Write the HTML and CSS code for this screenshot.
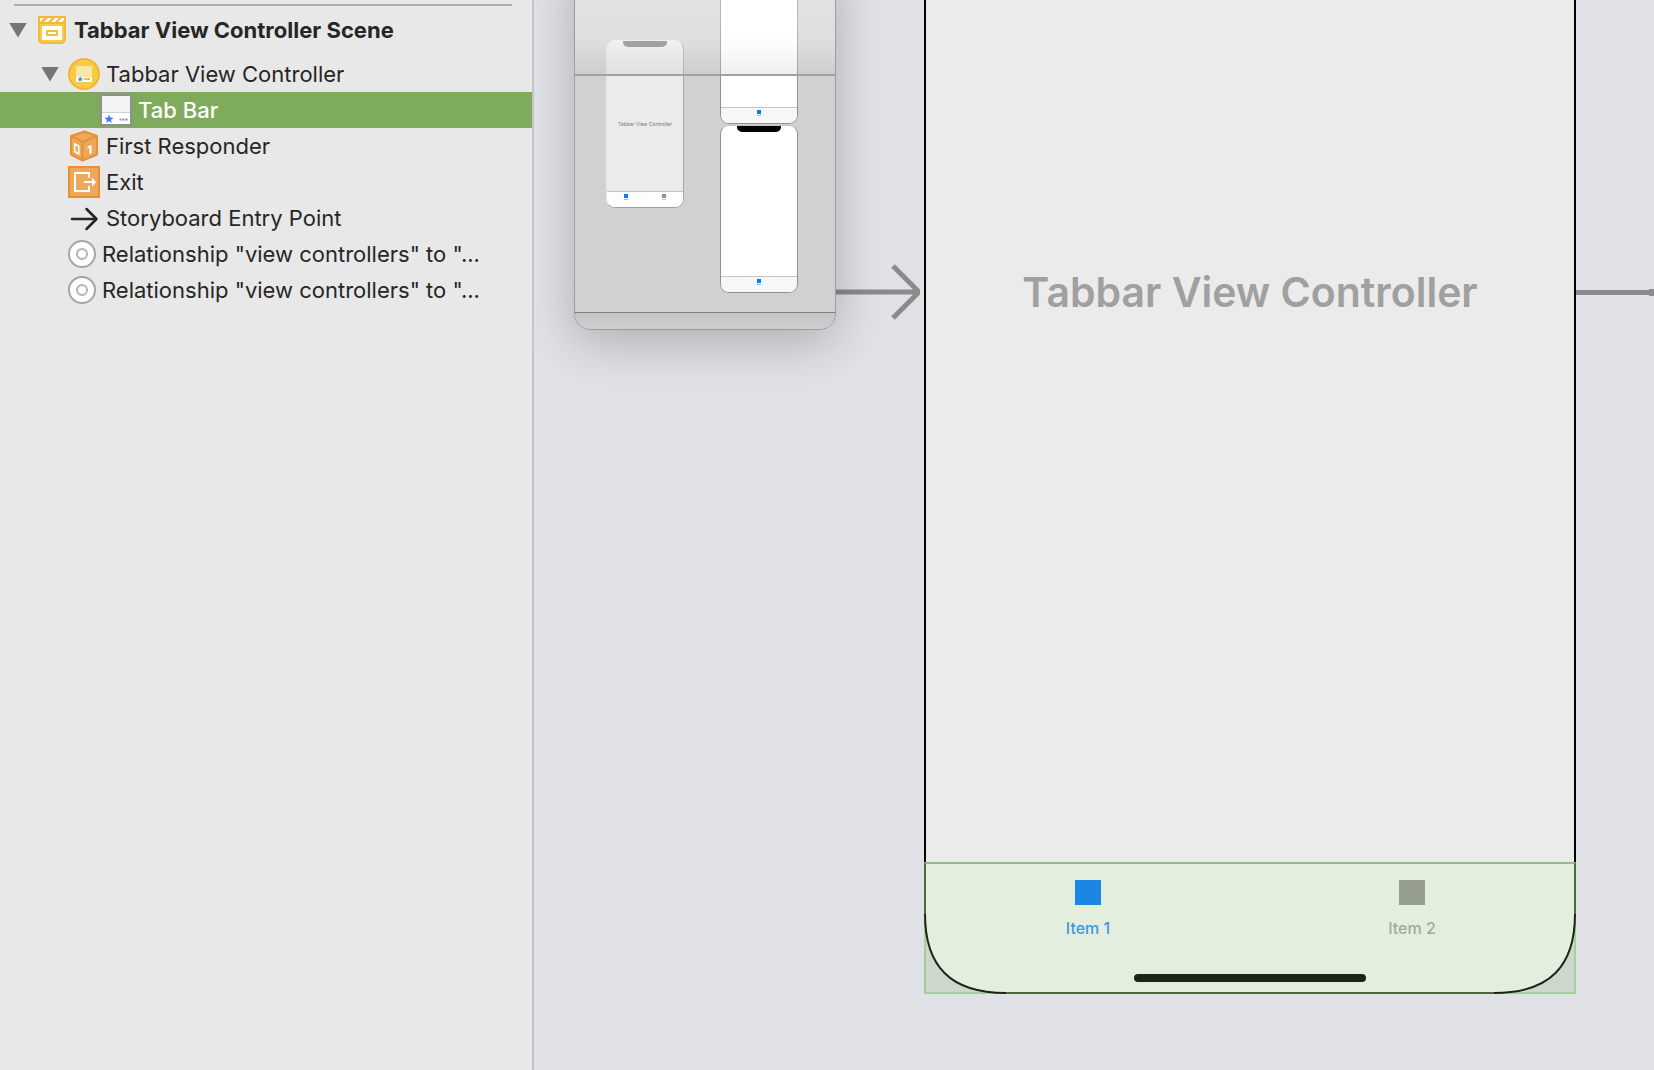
FILE: index.html
```html
<!DOCTYPE html>
<html lang="en">
<head>
  <meta charset="UTF-8" />
  <meta name="viewport" content="width=device-width, initial-scale=1.0"/>
  <title>Tabbar View Controller Scene</title>
  <link rel="stylesheet" href="styles.css">
</head>
<body>

  <!-- Document outline -->
  <aside class="outline">
    <hr>
    <ul class="tree">
      <li class="row scene">
        <button class="toggle" aria-label="Collapse scene"></button>
        <svg class="icon" viewBox="0 0 32 32">
          <path d="M2 2h28v23a5 5 0 0 1-5 5H7a5 5 0 0 1-5-5z" fill="#f5b83d"/>
          <path d="M4 8V4h4zM8 8l4-4h4l-4 4zM15 8l4-4h4l-4 4zM22 8l4-4h2v2l-2 2z" fill="#fff"/>
          <path d="M4 10h24v14a4 4 0 0 1-4 4H8a4 4 0 0 1-4-4z" fill="#f7cb45"/>
          <path d="M6 12h20v14H6z" fill="#fff"/>
          <path d="M11 17h10v4H11z" fill="#fff" stroke="#f5bd3f" stroke-width="2"/>
        </svg>
        <span>Tabbar View Controller Scene</span>
      </li>
      <li class="row nested">
        <button class="toggle" aria-label="Collapse controller"></button>
        <svg class="icon" viewBox="0 0 32 32">
          <circle cx="16" cy="16" r="15" fill="#f7cb45" stroke="#f4b43b" stroke-width="2"/>
          <path d="M8 8h16v11H8z" fill="#fbe6a8"/>
          <path d="M8 19h16v5H8z" fill="#fff"/>
          <path d="M12.300 18.500l.8 1.700 1.900.2-1.400 1.300.4 1.900-1.700-1-1.700 1 .4-1.900-1.400-1.300 1.900-.2z" fill="#3d86f6"/>
          <path d="M16 20h6v2h-6z" fill="#f3b65c"/>
        </svg>
        <span>Tabbar View Controller</span>
      </li>
      <li class="row leaf selected">
        <svg class="icon" viewBox="0 0 32 32">
          <path d="M1 1h30v30H1z" fill="#f3f3f3" stroke="#8e8e93" stroke-width="2"/>
          <path d="M2 19h28v11H2z" fill="#fff"/>
          <path d="M2 18h28v1H2z" fill="#cfcfcf"/>
          <path d="M9 20.500l1.200 3.100 3.300.2-2.500 2.100.8 3.200L9 27.300l-2.800 1.800.8-3.200-2.500-2.100 3.300-.2z" fill="#3f7df6"/>
          <path d="M19.500 24.500h2v2h-2zM22.500 24.500h2v2h-2zM25.500 24.500h2v2h-2z" fill="#8e8e93"/>
        </svg>
        <span>Tab Bar</span>
      </li>
      <li class="row">
        <svg class="icon" viewBox="0 0 32 32">
          <path d="M16.500 1.500L29 6v18.500L14.500 30.500 3 24.500V6z" fill="#eda85a" stroke="#e79136" stroke-width="2" stroke-linejoin="round"/>
          <path d="M3 6l11.500 6L29 6M14.500 12v18" fill="none" stroke="#e79136" stroke-width="2"/>
          <path d="M6.700 14l4 2v8l-4-2.500z" fill="none" stroke="#fff" stroke-width="1.500"/>
          <path d="M19.500 17l3-2h1v8.500l-2 .6V17.800l-2 .9z" fill="#fff"/>
        </svg>
        <span>First Responder</span>
      </li>
      <li class="row">
        <svg class="icon" viewBox="0 0 32 32">
          <path d="M1 1h30v30H1z" fill="#eda85a" stroke="#e79136" stroke-width="2"/>
          <path d="M21 12V7H7v18h14v-5" fill="none" stroke="#fff" stroke-width="2"/>
          <path d="M16 15h8v-3.500l4 4.500-4 4.500V17h-8z" fill="#fff"/>
        </svg>
        <span>Exit</span>
      </li>
      <li class="row">
        <svg class="icon" viewBox="0 0 32 32">
          <path d="M4 17h24M18.500 7L28.500 17l-10 10" fill="none" stroke="#262626" stroke-width="2.500" stroke-linecap="round" stroke-linejoin="round"/>
        </svg>
        <span>Storyboard Entry Point</span>
      </li>
      <li class="row">
        <svg class="icon small" viewBox="0 0 28 28">
          <circle cx="14" cy="14" r="13" fill="#fff" stroke="#a6a6a6" stroke-width="2"/>
          <circle cx="14" cy="14" r="5" fill="none" stroke="#b3b3b3" stroke-width="2"/>
        </svg>
        <span>Relationship "view controllers" to "...</span>
      </li>
      <li class="row">
        <svg class="icon small" viewBox="0 0 28 28">
          <circle cx="14" cy="14" r="13" fill="#fff" stroke="#a6a6a6" stroke-width="2"/>
          <circle cx="14" cy="14" r="5" fill="none" stroke="#b3b3b3" stroke-width="2"/>
        </svg>
        <span>Relationship "view controllers" to "...</span>
      </li>
    </ul>
  </aside>

  <!-- Storyboard canvas -->
  <main class="canvas">

    <svg class="entry-arrow" viewBox="0 0 84 56">
      <path d="M0 28h80M57 2l26 26-26 26" fill="none" stroke="#8b8b8b" stroke-width="5"/>
    </svg>

    <div class="minimap">
      <div class="mini mini-tabbar">
        <i class="notch"></i>
        <p>Tabbar View Controller</p>
        <div class="mini-tabs"><i></i><i class="off"></i></div>
      </div>
      <div class="mini mini-first">
        <div class="mini-tabs"><i></i></div>
      </div>
      <div class="mini mini-second">
        <i class="notch"></i>
        <div class="mini-tabs"><i></i></div>
      </div>
      <div class="minimap-top"></div>
      <div class="minimap-bottom"></div>
    </div>

    <section class="phone">
      <h1>Tabbar View Controller</h1>
      <nav class="tab-bar">
        <button class="tab active"><i></i>Item 1</button>
        <button class="tab"><i></i>Item 2</button>
        <div class="home-indicator"></div>
        <svg class="corner" viewBox="0 0 90 90">
          <path d="M0 10C1 62 26 89 82 90H0z" fill="#cdd8cd"/>
          <path d="M1 10v79h81" fill="none" stroke="#a5cf94" stroke-width="2"/>
          <path d="M1 10C1 62 26 89 82 89" fill="none" stroke="#1c2415" stroke-width="2"/>
        </svg>
        <svg class="corner right" viewBox="0 0 90 90">
          <path d="M0 10C1 62 26 89 82 90H0z" fill="#cdd8cd"/>
          <path d="M1 10v79h81" fill="none" stroke="#a5cf94" stroke-width="2"/>
          <path d="M1 10C1 62 26 89 82 89" fill="none" stroke="#1c2415" stroke-width="2"/>
        </svg>
      </nav>
    </section>

    <div class="segue"></div>
  </main>

</body>
</html>
```
FILE: styles.css
```css
body {
  font-family: Inter, "Liberation Sans", sans-serif;
  margin: 0;
  min-height: 100vh;
  display: flex;
  background-color: #e1e2e7;
  color: #262626;
}

button {
  font-family: inherit;
  border: none;
  background: none;
  padding: 0;
  cursor: pointer;
}

/* Outline */
.outline {
  width: 532px;
  flex-shrink: 0;
  background-color: #e8e8e8;
  border-right: 2px solid #c4c4c4;
}

.outline hr {
  height: 2px;
  margin: 4px 20px 6px 14px;
  border: none;
  background-color: #adadad;
}

.tree {
  list-style: none;
  margin: 0;
  padding: 0;
}

.row {
  display: flex;
  align-items: center;
  height: 36px;
  padding-left: 68px;
  font-size: 22px;
  white-space: nowrap;
}

.row.scene {
  padding-left: 9px;
  margin-bottom: 8px;
  font-weight: 700;
}

.row.nested {
  padding-left: 41px;
}

.row.leaf {
  padding-left: 100px;
}

.row.selected {
  background-color: #7fac5c;
  color: white;
  font-weight: 500;
}

.toggle {
  width: 18px;
  height: 15px;
  margin-right: 9px;
  background-color: #757575;
  clip-path: polygon(0 0, 100% 0, 50% 100%);
}

.icon {
  width: 32px;
  height: 32px;
  margin-right: 6px;
}

.icon.small {
  width: 28px;
  height: 28px;
}

/* Canvas */
.canvas {
  position: relative;
  flex: 1;
  overflow: hidden;
}

.minimap {
  position: absolute;
  left: 40px;
  top: -40px;
  width: 260px;
  height: 368px;
  border: 1px solid #9c9d9d;
  border-radius: 16px;
  background-color: #d0d1d3;
  box-shadow: 0 12px 50px rgba(0, 0, 0, 0.24);
  overflow: hidden;
}

.minimap-top {
  position: absolute;
  top: 0;
  left: 0;
  right: 0;
  height: 113px;
  border-bottom: 2px solid #a0a1a1;
  background: linear-gradient(rgba(255, 255, 253, 0.35) 50%, rgba(250, 250, 245, 0.3) 72%, rgba(200, 200, 198, 0.3));
}

.minimap-bottom {
  position: absolute;
  bottom: 0;
  left: 0;
  right: 0;
  height: 16px;
  border-top: 1px solid #808080;
  background: linear-gradient(#c5c6c5, #cdcecd);
}

.mini {
  position: absolute;
  box-sizing: border-box;
  width: 78px;
  height: 168px;
  border: 1px solid #909090;
  border-radius: 9px;
  background-color: white;
  display: flex;
  flex-direction: column;
  align-items: center;
  overflow: hidden;
}

.mini-tabbar {
  left: 31px;
  top: 79px;
  background-color: #ebebeb;
  border-color: #ebebeb #a8a8a8 #a0a0a0 #e4e4e4;
}

.mini-first {
  left: 145px;
  top: -5px;
}

.mini-second {
  left: 145px;
  top: 164px;
  border-top-color: #c0c0c0;
}

.notch {
  width: 44px;
  height: 6px;
  border-radius: 0 0 5px 5px;
  background-color: black;
}

.mini-tabbar .notch {
  background-color: #7c7c7c;
}

.mini p {
  margin: 73px 0 0;
  font-size: 5px;
  line-height: 8px;
  color: #777;
}

.mini-tabs {
  width: 100%;
  height: 15px;
  margin-top: auto;
  border-top: 1px solid #c4c4c4;
  background-color: #f7f7f7;
  display: flex;
  justify-content: space-around;
}

.mini-tabbar .mini-tabs {
  background-color: #fdfdfd;
}

.mini-tabs i {
  width: 4px;
  height: 4px;
  margin-top: 2px;
  background-color: #0a7aff;
}

.mini-tabs i::after {
  content: "";
  display: block;
  height: 1px;
  margin-top: 5px;
  background-color: #8dbdf8;
}

.mini-tabs .off {
  background-color: #929292;
}

.mini-tabs .off::after {
  background-color: #c0c0c0;
}

.entry-arrow {
  position: absolute;
  left: 302px;
  top: 264px;
  width: 84px;
  height: 56px;
}

.segue {
  position: absolute;
  left: 1042px;
  right: 0;
  top: 290px;
  height: 5px;
  background-color: #8b8b8b;
}

.segue::after {
  content: "";
  position: absolute;
  right: 0;
  top: -1px;
  width: 5px;
  height: 7px;
  background-color: #8b8b8b;
}

/* Device */
.phone {
  position: absolute;
  left: 390px;
  top: 0;
  width: 652px;
  height: 994px;
  display: flex;
  flex-direction: column;
  justify-content: space-between;
  background-color: #ebebeb;
}

.phone h1 {
  flex: 1;
  margin: 0;
  padding-top: 266px;
  border-left: 2px solid black;
  border-right: 2px solid black;
  font-size: 41px;
  line-height: 52px;
  font-weight: 600;
  text-align: center;
  color: #a0a0a0;
}

.tab-bar {
  position: relative;
  box-sizing: border-box;
  height: 132px;
  display: flex;
  align-items: flex-start;
  background-color: #e3eedf;
  border: 2px solid #4a6b3c;
  border-top-color: #94bf81;
}

.tab {
  flex: 1;
  display: flex;
  flex-direction: column;
  align-items: center;
  gap: 13px;
  padding-top: 16px;
  font-size: 16px;
  line-height: 20px;
  font-weight: 500;
  color: #a0aa9a;
}

.tab i {
  width: 26px;
  height: 25px;
  background-color: #959d8f;
}

.tab.active {
  color: #3f97e2;
}

.tab.active i {
  background-color: #1c86e3;
}

.home-indicator {
  position: absolute;
  left: 50%;
  bottom: 10px;
  width: 232px;
  height: 8px;
  margin-left: -116px;
  border-radius: 4px;
  background-color: #1c2415;
}

.corner {
  position: absolute;
  left: -2px;
  bottom: -2px;
  width: 90px;
  height: 90px;
}

.corner.right {
  left: auto;
  right: -2px;
  transform: scaleX(-1);
}
```
